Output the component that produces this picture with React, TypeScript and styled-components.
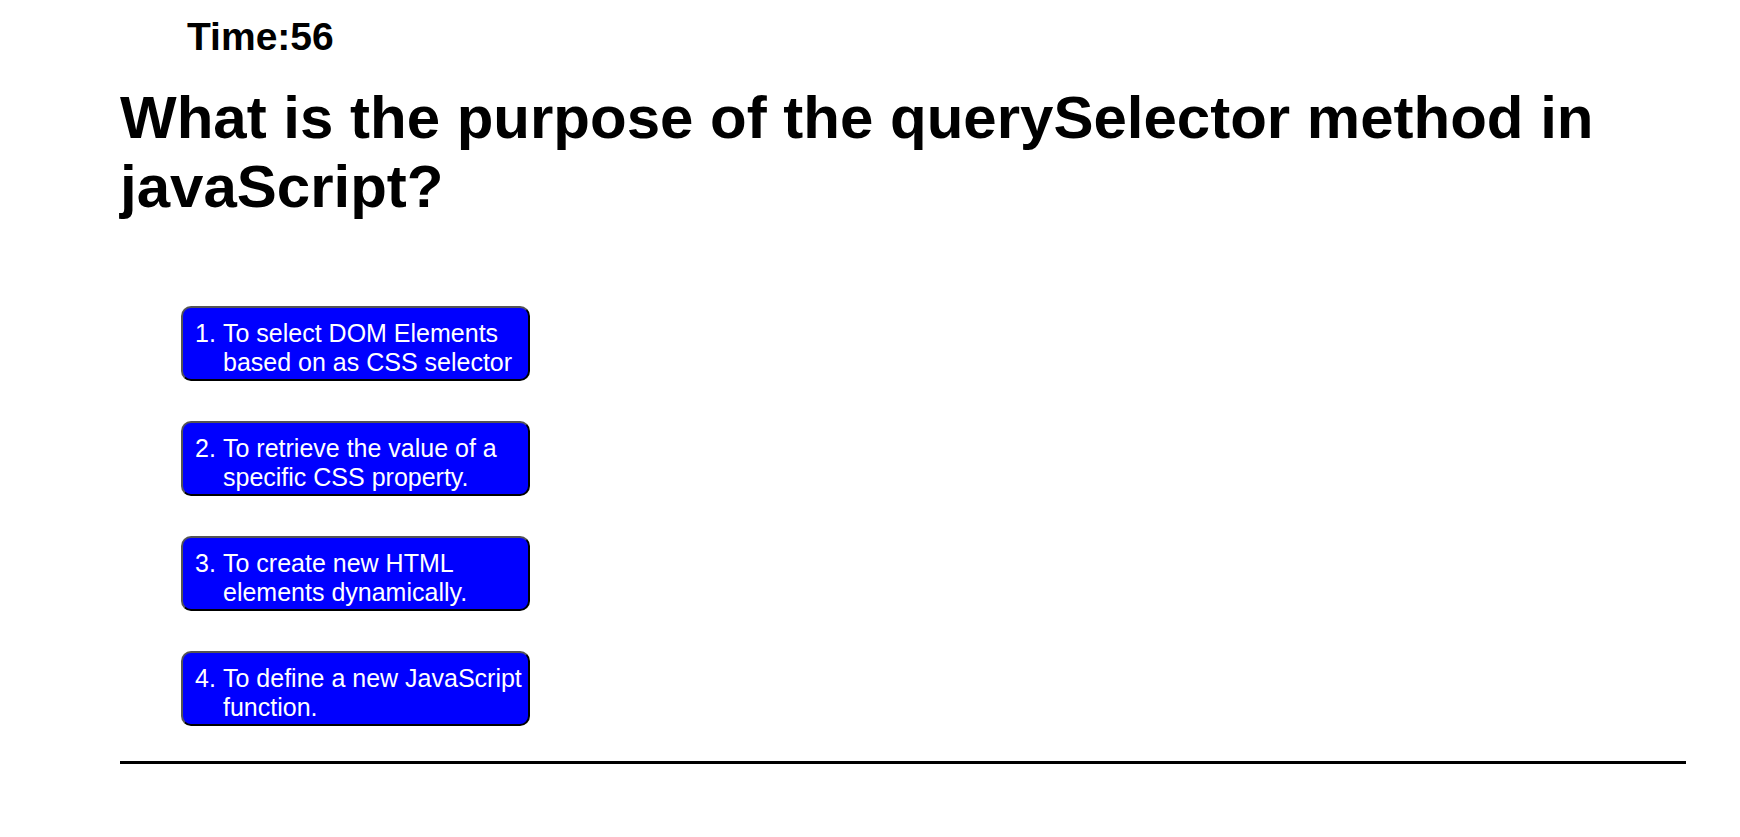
import styled, { createGlobalStyle } from 'styled-components';

const GlobalStyle = createGlobalStyle`
  html, body {
    margin: 0;
    padding: 0;
    background: #ffffff;
  }
  body {
    font-family: "Liberation Sans", Arial, sans-serif;
    color: #000000;
  }
`

const Page = styled.main`
  width: 1566px;
  margin-left: 120px;
  padding-top: 14px;
`

const Timer = styled.h2`
  margin: 0;
  padding-left: 67px;
  font-size: 39px;
  line-height: 46px;
  font-weight: 700;
`

const Question = styled.h1`
  margin: 23px 0 0;
  font-size: 60px;
  line-height: 69px;
  font-weight: 700;
`

const Options = styled.div`
  display: flex;
  flex-direction: column;
  align-items: flex-start;
  gap: 40px;
  margin-top: 85px;
  padding-left: 61px;
`

const OptionButton = styled.button`
  display: flex;
  align-items: flex-start;
  box-sizing: border-box;
  width: 349px;
  height: 75px;
  padding: 11px 6px 1px 12px;
  background: #0000ff;
  color: #ffffff;
  border: 2px solid;
  border-color: #555555 #000000 #000000 #555555;
  border-radius: 10px;
  font-family: "Liberation Sans", Arial, sans-serif;
  font-size: 25px;
  line-height: 29px;
  text-align: left;
  cursor: pointer;
`

const Marker = styled.span`
  flex: 0 0 28px;
`

const Label = styled.span`
  flex: 1;
`

const Divider = styled.hr`
  margin: 35px 0 0;
  border: none;
  height: 3px;
  background: #000000;
`

const options = [
  'To select DOM Elements based on as CSS selector',
  'To retrieve the value of a specific CSS property.',
  'To create new HTML elements dynamically.',
  'To define a new JavaScript function.',
];

export default function App() {
  return (
    <>
      <GlobalStyle />
      <Page>
        <Timer>Time:56</Timer>
        <Question>What is the purpose of the querySelector method in javaScript?</Question>
        <Options>
          {options.map((text, i) => (
            <OptionButton key={i}>
              <Marker>{i + 1}.</Marker>
              <Label>{text}</Label>
            </OptionButton>
          ))}
        </Options>
        <Divider />
      </Page>
    </>
  );
}
